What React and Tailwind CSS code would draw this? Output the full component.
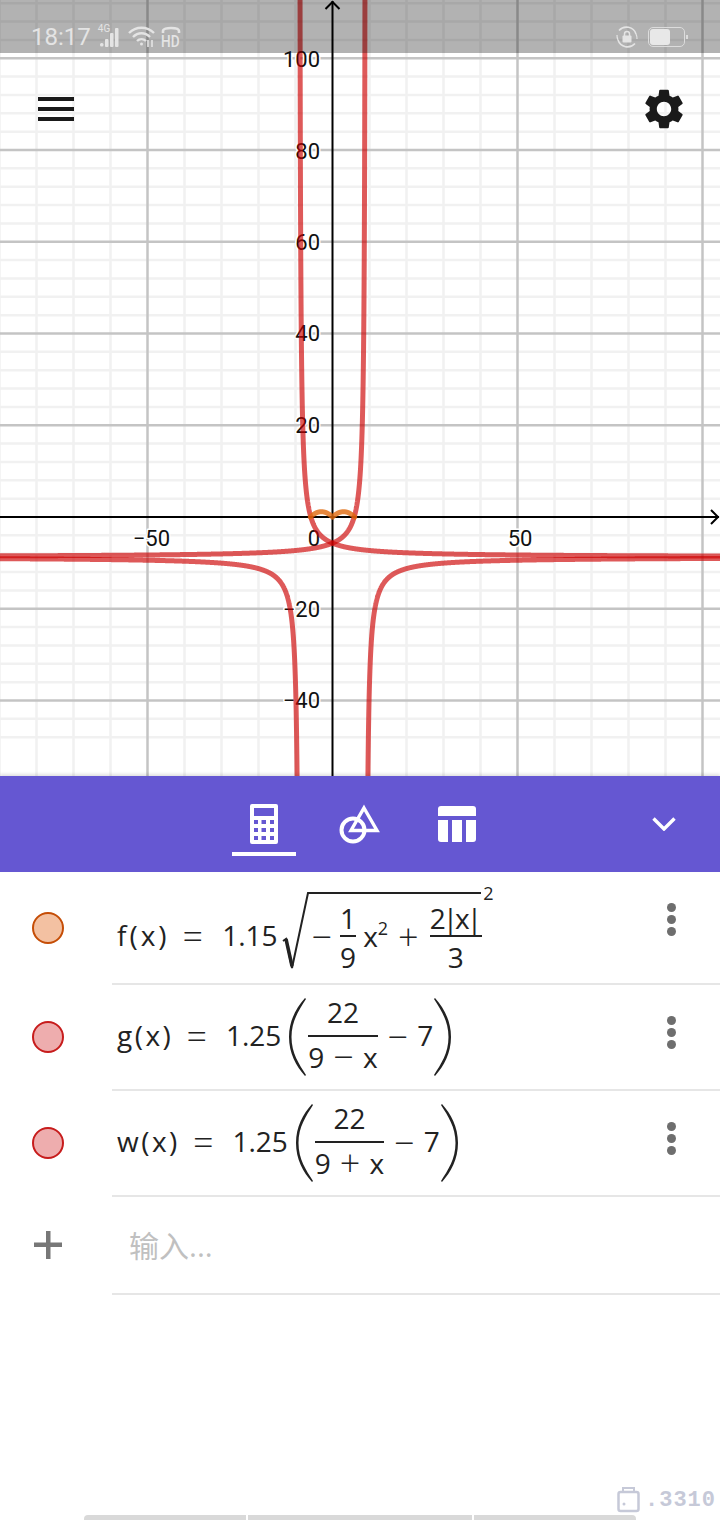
const OX = 332.5
const OY = 517
const SX = 3.7
const SY = 4.5875

const toX = x => OX + x * SX
const toY = y => OY - y * SY

const g = x => 1.25 * (22 / (9 - x) - 7)
const w = x => 1.25 * (22 / (9 + x) - 7)
const f = x => 1.15 * (-(x * x) / 9 + (2 * Math.abs(x)) / 3)

function curve(fn, from, to, step = 0.02) {
  const pts = []
  for (let x = from; x <= to; x += step) {
    const y = toY(fn(x))
    if (y < -20 || y > 800) continue
    pts.push(`${toX(x).toFixed(2)},${y.toFixed(2)}`)
  }
  return 'M' + pts.join('L')
}

const xMinor = Array.from({ length: 19 }, (_, i) => i - 9).filter(k => k % 5 !== 0)
const xMajor = [-5, 5, 10]
const yMinor = Array.from({ length: 41 }, (_, i) => 28 - i).filter(k => k % 5 !== 0)
const yMajor = [5, 4, 3, 2, 1, -1, -2, -3]
const yLabels = [
  ['100', 59], ['80', 151], ['60', 242], ['40', 333], ['20', 425], ['−20', 609], ['−40', 700],
]

function Graph() {
  return (
    <svg width="720" height="776" viewBox="0 0 720 776" className="block">
      <rect width="720" height="776" fill="#ffffff" />
      {xMinor.map(k => <line key={k} x1={OX + k * 37} x2={OX + k * 37} y1="0" y2="776" stroke="#f1f1f1" strokeWidth="2.5" />)}
      {yMinor.map(k => <line key={k} x1="0" x2="720" y1={OY - k * 18.35} y2={OY - k * 18.35} stroke="#f1f1f1" strokeWidth="2.5" />)}
      {xMajor.map(k => <line key={k} x1={OX + k * 37} x2={OX + k * 37} y1="0" y2="776" stroke="#c4c4c4" strokeWidth="2.5" />)}
      {yMajor.map(k => <line key={k} x1="0" x2="720" y1={OY - k * 91.75} y2={OY - k * 91.75} stroke="#c4c4c4" strokeWidth="2.5" />)}

      <line x1={OX} x2={OX} y1="1" y2="776" stroke="#000" strokeWidth="2" />
      <line x1="0" x2="719" y1={OY} y2={OY} stroke="#000" strokeWidth="2" />
      <path d={`M${OX - 7} 9L${OX} 2L${OX + 7} 9`} fill="none" stroke="#000" strokeWidth="2" />
      <path d={`M711 ${OY - 7}L718 ${OY}L711 ${OY + 7}`} fill="none" stroke="#000" strokeWidth="2" />

      <g className="font-['Roboto',sans-serif] text-[22px] [paint-order:stroke]" fill="#111111" stroke="#ffffff" strokeWidth="3" strokeLinejoin="round">
        {yLabels.map(([t, y]) => <text key={t} x="320" y={y + 8} textAnchor="end" stroke="#ffffff">{t}</text>)}
        <text x="170" y="546" textAnchor="end">−50</text>
        <text x="520" y="546" textAnchor="middle">50</text>
        <text x="320" y="546" textAnchor="end">0</text>
      </g>

      <g fill="none" strokeWidth="5" strokeLinecap="round" strokeLinejoin="round">
        <path d={curve(g, -90.5, 8.9)} stroke="#cc0000" opacity="0.65" />
        <path d={curve(g, 9.1, 105)} stroke="#cc0000" opacity="0.65" />
        <path d={curve(w, -8.9, 105)} stroke="#cc0000" opacity="0.65" />
        <path d={curve(w, -90.5, -9.1)} stroke="#cc0000" opacity="0.65" />
        <path d={curve(f, -6, 6)} stroke="#e0690c" opacity="0.8" />
      </g>
    </svg>
  )
}

function StatusBar() {
  return (
    <div className="absolute top-0 left-0 w-full h-[53px] bg-black/30 flex items-center pt-[21px] pl-[31px] pr-[32px] text-[#e4e4e4] font-['Roboto',sans-serif]">
      <span className="text-[24px] leading-none">18:17</span>
      <div className="relative ml-[6px] w-[24px] h-[24px]">
        <span className="absolute -top-[1px] left-[1px] text-[10px] leading-none">4G</span>
        <svg width="24" height="24" className="absolute top-0 left-0" fill="currentColor">
          <rect x="3" y="18" width="3.5" height="3.5" rx="1.5" />
          <rect x="8" y="14" width="3.5" height="8" rx="1" />
          <rect x="13" y="8" width="3.5" height="14" rx="1" />
          <rect x="18" y="3" width="3.5" height="19" rx="1" />
        </svg>
      </div>
      <svg width="28" height="22" viewBox="0 0 28 22" fill="none" stroke="currentColor" strokeWidth="2.4" className="ml-[7px]">
        <path d="M1 7C8 0 19 0 26 7" />
        <path d="M5 11C10 6 17 6 22 11" />
        <path d="M9 15C11.5 12.5 15.5 12.5 18 15" />
        <circle cx="13.5" cy="18" r="1.5" fill="currentColor" stroke="none" />
        <path d="M20 14v7M24 21v-7" strokeWidth="1.6" />
      </svg>
      <div className="relative ml-[4px] w-[22px] h-[24px]">
        <svg width="22" height="9" viewBox="0 0 22 9" fill="none" stroke="currentColor" strokeWidth="2.6" className="absolute top-0 left-0">
          <path d="M3 8V6C3 2 19 2 19 6V8" />
        </svg>
        <span className="absolute top-[9px] left-[1px] text-[16px] leading-none font-medium scale-x-85 origin-left">HD</span>
      </div>
      <svg width="24" height="24" viewBox="0 0 24 24" fill="none" stroke="currentColor" strokeWidth="1.6" className="ml-auto">
        <path d="M21 9A10 10 0 0 0 4 5.5M3 15A10 10 0 0 0 20 18.5" />
        <path d="M2 10a10 10 0 0 0 1 5M22 14a10 10 0 0 0-1-5" strokeWidth="1.2" />
        <rect x="7.5" y="10.5" width="9" height="7" rx="1" fill="currentColor" stroke="none" />
        <path d="M9.5 11V9a2.5 2.5 0 0 1 5 0v2" strokeWidth="1.5" />
      </svg>
      <div className="ml-[9px] flex items-center">
        <div className="w-[37px] h-[20px] rounded-[5px] border border-[#dcdcdc] p-[1px] flex">
          <div className="w-[20px] h-full rounded-[3px] bg-[#e8e8e8]" />
        </div>
        <div className="ml-[1px] w-[2px] h-[4px] bg-[#dcdcdc]" />
      </div>
    </div>
  )
}

function CalcIcon() {
  return (
    <svg width="28" height="40" viewBox="0 0 28 40" fill="#ffffff">
      <path fillRule="evenodd" d="M2 0H26A2 2 0 0 1 28 2V38A2 2 0 0 1 26 40H2A2 2 0 0 1 0 38V2A2 2 0 0 1 2 0ZM4 4V12H24V4ZM4 16V20H8V16ZM11.5 16V20H16V16ZM20 16V20H24V16ZM4 24V28H8V24ZM11.5 24V28H16V24ZM20 24V28H24V24ZM4 32V36H8V32ZM11.5 32V36H16V32ZM20 32V36H24V32Z" />
    </svg>
  )
}

function ShapesIcon() {
  return (
    <svg width="42" height="42" viewBox="0 0 42 42" fill="none" stroke="#ffffff" strokeWidth="4">
      <circle cx="14" cy="27" r="11.5" />
      <path d="M25 5L38 27.5H12Z" strokeWidth="3.4" />
    </svg>
  )
}

function TableIcon() {
  return (
    <svg width="38" height="36" viewBox="0 0 38 36" fill="#ffffff">
      <path d="M3 0H35A3 3 0 0 1 38 3V10H0V3A3 3 0 0 1 3 0Z" />
      <path d="M0 14H10V36H3A3 3 0 0 1 0 33Z" />
      <rect x="14" y="14" width="10" height="22" />
      <path d="M28 14H38V33A3 3 0 0 1 35 36H28Z" />
    </svg>
  )
}

function Toolbar() {
  return (
    <div className="relative z-10 h-[96px] bg-[#6557d2] flex items-center pl-[232px] pr-[44px] shadow-[0_-2px_3px_rgba(0,0,0,0.12)]">
      <div className="relative w-[64px] h-full flex items-center justify-center">
        <CalcIcon />
        <div className="absolute left-0 bottom-[16px] w-full h-[4px] bg-white" />
      </div>
      <div className="w-[64px] ml-[32px] h-full flex items-center justify-center"><ShapesIcon /></div>
      <div className="w-[64px] ml-[33px] h-full flex items-center justify-center"><TableIcon /></div>
      <svg width="24" height="14" viewBox="0 0 24 14" fill="none" stroke="#ffffff" strokeWidth="3.4" className="ml-auto">
        <path d="M1.5 1.5L12 12L22.5 1.5" />
      </svg>
    </div>
  )
}

// operators are set larger and lighter than the digits, like the math font
function Op({ children, className = '' }) {
  return <span className={`text-[36px] leading-[28px] font-light -translate-y-[1px] ${className}`}>{children}</span>
}

function Num({ children, className = '' }) {
  return <span className={`-translate-y-[3px] ${className}`}>{children}</span>
}

function Frac({ top, bottom, raise = '', className = '' }) {
  return (
    <span className={`inline-flex flex-col items-center ${className}`}>
      <span className={`h-[33px] -mt-[2px] flex items-center justify-center whitespace-nowrap ${raise}`}>{top}</span>
      <span className="w-full h-[2px] bg-[#222222] my-[1px]" />
      <span className="h-[33px] mt-[2px] flex items-center justify-center whitespace-nowrap">{bottom}</span>
    </span>
  )
}

function Paren({ right, className = '' }) {
  return (
    <svg width="18" height="78" viewBox="0 0 18 78" fill="#222222" className={`-translate-y-[1px] ${className}`}>
      <path d={right ? 'M1 0C10 10 17 23 17 39C17 55 10 68 1 78L0 77C7 66 14.5 55 14.5 39C14.5 23 7 12 0 1Z' : 'M17 0C8 10 1 23 1 39C1 55 8 68 17 78L18 77C11 66 3.5 55 3.5 39C3.5 23 11 12 18 1Z'} />
    </svg>
  )
}

function Row({ children, height, color, border, mathClass }) {
  return (
    <div className={`flex ${height}`}>
      <div className="w-[112px] pr-[16px] pb-[2px] flex items-center justify-center shrink-0">
        <div className={`w-[32px] h-[32px] rounded-full border-2 ${color} ${border}`} />
      </div>
      <div className="relative flex-1 border-b-2 border-[#e6e6e6] flex items-center pl-[5px]">
        <div className={`flex items-center text-[28px] leading-none text-[#222222] font-['Open_Sans',sans-serif] whitespace-nowrap ${mathClass}`}>
          {children}
        </div>
        <div className="absolute top-[31px] left-[555px] flex flex-col gap-[3px]">
          <span className="w-[9px] h-[9px] rounded-full bg-[#6e6e6e]" />
          <span className="w-[9px] h-[9px] rounded-full bg-[#6e6e6e]" />
          <span className="w-[9px] h-[9px] rounded-full bg-[#6e6e6e]" />
        </div>
      </div>
    </div>
  )
}

function Denominator({ op }) {
  return (
    <span className="flex items-center">
      <span>9</span>
      <span className="ml-[9px] text-[36px] leading-[24px] font-light">{op}</span>
      <span className="ml-[9px]">x</span>
    </span>
  )
}

function FunctionList() {
  return (
    <div>
      <Row height="h-[113px]" color="bg-[#f3c1a2]" border="border-[#c54d06]" mathClass="mt-[21px]">
        <Num className="tracking-[3px]">f(x)</Num>
        <Op className="ml-[13px]">=</Op>
        <Num className="ml-[19px]">1.15</Num>
        <span className="relative flex items-start -mt-[11px] ml-[4px]">
          <svg width="28" height="80" viewBox="0 0 28 80" fill="none" stroke="#222222" className="shrink-0">
            <path d="M1 49L4 47L10 76L26 1H28" strokeWidth="2" />
            <path d="M4 47L10 74" strokeWidth="3.5" />
          </svg>
          <span className="flex items-center border-t-2 border-[#222222] pt-[9px] w-[172px] -ml-[1px]">
            <Op className="ml-[3px]">−</Op>
            <Frac top="1" bottom="9" className="ml-[8px]" />
            <span className="ml-[7px] flex items-start -translate-y-[2px]">x<span className="text-[18px] -mt-[3px] leading-none">2</span></span>
            <Op className="ml-[10px]">+</Op>
            <Frac top={<span className="tracking-[-3px] pr-[3px]">2|x|</span>} bottom="3" className="ml-[11px]" />
          </span>
          <span className="absolute -top-[8px] -right-[13px] text-[18px] leading-none">2</span>
        </span>
      </Row>
      <Row height="h-[106px]" color="bg-[#eeadae]" border="border-[#c71c1c]" mathClass="mt-[2px]">
        <Num className="tracking-[2.5px]">g(x)</Num>
        <Op className="ml-[13px]">=</Op>
        <Num className="ml-[19px]">1.25</Num>
        <Paren className="ml-[7px]" />
        <Frac top="22" raise="-translate-y-[6px]" bottom={<Denominator op="−" />} className="ml-[2px]" />
        <Op className="ml-[10px]">−</Op>
        <Num className="ml-[9px]">7</Num>
        <Paren right className="ml-[1px]" />
      </Row>
      <Row height="h-[106px]" color="bg-[#eeadae]" border="border-[#c71c1c]" mathClass="mt-[2px]">
        <Num className="tracking-[2.5px]">w(x)</Num>
        <Op className="ml-[13px]">=</Op>
        <Num className="ml-[19px]">1.25</Num>
        <Paren className="ml-[7px]" />
        <Frac top="22" raise="-translate-y-[6px]" bottom={<Denominator op="+" />} className="ml-[2px]" />
        <Op className="ml-[10px]">−</Op>
        <Num className="ml-[9px]">7</Num>
        <Paren right className="ml-[1px]" />
      </Row>
      <div className="flex h-[98px]">
        <div className="w-[112px] pr-[16px] flex items-center justify-center shrink-0">
          <svg width="30" height="30" viewBox="0 0 30 30" fill="#777777" className="mt-[-2px]">
            <rect x="13" y="1" width="4.5" height="28" />
            <rect x="1" y="12.5" width="28" height="4.5" />
          </svg>
        </div>
        <div className="flex-1 border-b-2 border-[#e6e6e6] flex items-center pl-[17px] text-[30px] text-[#c0c0c0] font-['Open_Sans','Noto_Sans_CJK_SC',sans-serif]">
          输入...
        </div>
      </div>
    </div>
  )
}

export default function App() {
  return (
    <div className="relative w-[720px] h-[1520px] bg-white overflow-hidden flex flex-col">
      <div className="relative h-[776px]">
        <Graph />
        <StatusBar />
        <button className="absolute left-[38px] top-[97px] flex flex-col gap-[6px]">
          <span className="block w-[36px] h-[4px] bg-[#1a1a1a]" />
          <span className="block w-[36px] h-[4px] bg-[#1a1a1a]" />
          <span className="block w-[36px] h-[4px] bg-[#1a1a1a]" />
        </button>
        <svg width="48" height="48" viewBox="0 0 24 24" fill="#1a1a1a" className="absolute left-[640px] top-[85px]">
          <path d="M19.14 12.94c.04-.3.06-.61.06-.94 0-.32-.02-.64-.07-.94l2.03-1.58a.49.49 0 0 0 .12-.61l-1.92-3.32a.488.488 0 0 0-.59-.22l-2.39.96c-.5-.38-1.03-.7-1.62-.94l-.36-2.54a.484.484 0 0 0-.48-.41h-3.84c-.24 0-.43.17-.47.41l-.36 2.54c-.59.24-1.13.57-1.62.94l-2.39-.96c-.22-.08-.47 0-.59.22L2.74 8.87c-.12.21-.08.47.12.61l2.03 1.58c-.05.3-.09.63-.09.94s.02.64.07.94l-2.03 1.58a.49.49 0 0 0-.12.61l1.92 3.32c.12.22.37.29.59.22l2.39-.96c.5.38 1.03.7 1.62.94l.36 2.54c.05.24.24.41.48.41h3.84c.24 0 .44-.17.47-.41l.36-2.54c.59-.24 1.13-.56 1.62-.94l2.39.96c.22.08.47 0 .59-.22l1.92-3.32c.12-.22.07-.47-.12-.61l-2.01-1.58zM12 15.6c-1.98 0-3.6-1.62-3.6-3.6s1.62-3.6 3.6-3.6 3.6 1.62 3.6 3.6-1.62 3.6-3.6 3.6z" />
        </svg>
      </div>
      <Toolbar />
      <FunctionList />

      <div className="absolute right-[4px] bottom-[7px] flex items-end text-[#c6c9d8]">
        <svg width="24" height="27" viewBox="0 0 24 27" fill="none" stroke="currentColor" strokeWidth="2.5">
          <rect x="1.5" y="6" width="20" height="19" rx="2" />
          <path d="M6 6V2H17V6" strokeWidth="2" />
          <circle cx="7" cy="18" r="1.5" fill="currentColor" stroke="none" />
        </svg>
        <span className="ml-[4px] mb-[1px] text-[22px] leading-none font-bold tracking-[1px] font-['Liberation_Mono',monospace]">.3310</span>
      </div>

      <div className="absolute left-[84px] bottom-0 flex gap-[2px]">
        <div className="w-[162px] h-[5px] bg-[#d9d9d9] rounded-tl-[4px]" />
        <div className="w-[224px] h-[5px] bg-[#d9d9d9]" />
        <div className="w-[162px] h-[5px] bg-[#d9d9d9] rounded-tr-[4px]" />
      </div>
    </div>
  )
}
